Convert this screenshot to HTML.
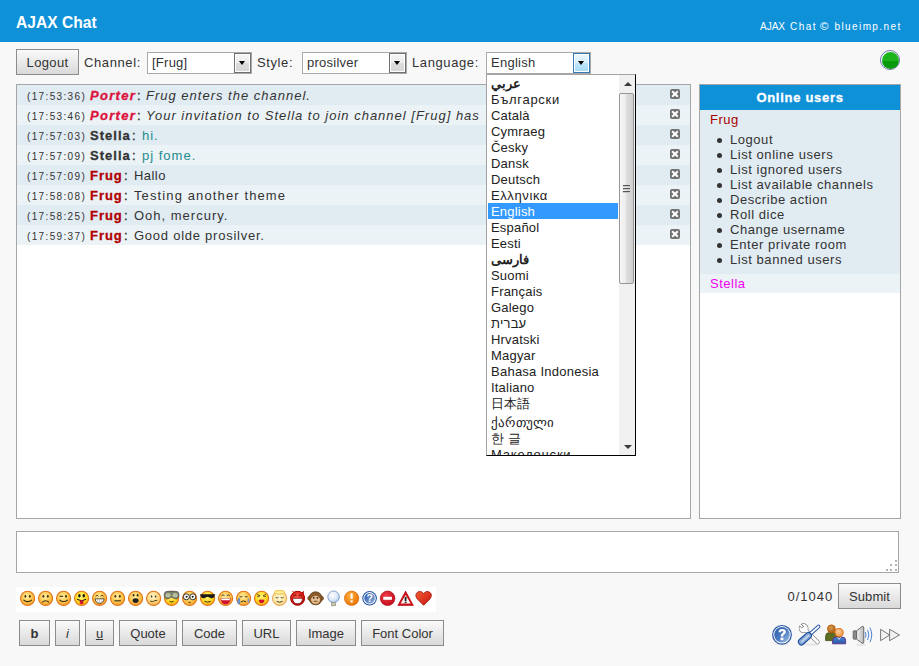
<!DOCTYPE html>
<html><head><meta charset="utf-8">
<style>
*{margin:0;padding:0;box-sizing:border-box}
html,body{width:919px;height:666px;overflow:hidden;background:#f8f8f8;font-family:"Liberation Sans",sans-serif;color:#333}
.a{position:absolute;white-space:nowrap}
#hdr{left:0;top:0;width:919px;height:42px;background:#0f91d8}
#title{left:16px;top:13.6px;font-size:15.6px;font-weight:bold;color:#fff;letter-spacing:0px}
.cp{top:21px;font-size:10px;color:#fff}
.btn{position:absolute;border:1px solid #8c8c8c;background:linear-gradient(#fafafa,#d9d9d9);font-size:13px;color:#333;text-align:center;white-space:nowrap}
.lbl{position:absolute;font-size:13px;color:#333;letter-spacing:0.6px;white-space:nowrap}
.sel{position:absolute;height:22px;border:1px solid #a9a9a9;background:#fff;font-size:13px;color:#333}
.sel .t{position:absolute;left:4px;top:2px;letter-spacing:0.25px}
.sel .dd{position:absolute;right:0;top:0;width:17px;height:20px;border:1px solid #707070;box-shadow:inset 0 0 0 1px #fff;background:linear-gradient(#f4f4f4 0,#ececec 50%,#dcdcdc 50%,#d6d6d6 100%)}
.sel .dd:after{content:"";position:absolute;left:3.75px;top:7px;border-left:3.75px solid transparent;border-right:3.75px solid transparent;border-top:4.5px solid #000}
.sel .dd.hov{border-color:#3479b4;background:linear-gradient(#eaf6fd 0,#d9f0fc 50%,#bee6fd 50%,#a7d9f5 100%)}
#chat{left:16px;top:84px;width:675px;height:435px;border:1px solid #a6a6a6;background:#fff}
.row{position:absolute;left:0;width:673px;height:20px;font-size:13px;white-space:nowrap}
.r1{background:#e1ebf2}.r2{background:#ecf3f7}
.ts{position:absolute;left:10px;top:6px;font-size:10px;color:#333;letter-spacing:1.35px}
.nm{position:absolute;left:73px;top:3px}
.col{position:absolute;top:3px;-webkit-text-stroke:0.35px #333}
.tx{position:absolute;top:3px;letter-spacing:1px}
.del{position:absolute;left:653px;top:4px;width:10px;height:10px;background:#707070;border-radius:2px}
.del:before,.del:after{content:"";position:absolute;left:1px;top:4px;width:8px;height:2px;background:#fff;transform:rotate(45deg)}
.del:after{transform:rotate(-45deg)}
.porter{color:#dc143c;font-weight:bold;font-style:italic;letter-spacing:1.3px;-webkit-text-stroke:0.35px #dc143c}
.frug{color:#b00000;font-weight:bold;letter-spacing:0.95px;-webkit-text-stroke:0.3px #b00000}
.stella{color:#333;font-weight:bold;letter-spacing:1.02px;-webkit-text-stroke:0.3px #333}
.teal{color:#1d8c90}
#online{left:699px;top:84px;width:202px;height:435px;border:1px solid #a6a6a6;background:#fff}
#online .hd{position:absolute;left:0;top:0;width:200px;height:25px;background:#0f91d8;color:#fff;font-weight:bold;font-size:13px;text-align:center;line-height:25px;letter-spacing:0.7px;-webkit-text-stroke:0.3px #fff}
#online .u1{position:absolute;left:0;top:25px;width:200px;height:164px;background:#e1ebf2}
#online .u2{position:absolute;left:0;top:189px;width:200px;height:19px;background:#ecf3f7}
.uname{position:absolute;left:10px;font-size:13px;letter-spacing:0.5px}
.menu{position:absolute;left:30px;top:47px;font-size:13px;line-height:15px;letter-spacing:0.55px}
.menu div{position:relative}
.menu div:before{content:"";position:absolute;left:-13px;top:5.5px;width:5px;height:5px;border-radius:50%;background:#333}
#ta{left:16px;top:531px;width:883px;height:42px;border:1px solid #a6a6a6;background:#fff}
#count{left:787.5px;top:589px;font-size:13px;letter-spacing:1px}
#dlist{left:486px;top:74px;width:150px;height:382px;border:1px solid #000;border-left-color:#a3a3a3;border-top-color:#a3a3a3;background:#fff;overflow:hidden}
.li{position:absolute;left:4px;height:16px;font-size:13px;line-height:16px;padding-top:1px;color:#222;letter-spacing:0.2px}
.li.sel2{left:1px;width:130px;padding-left:3px;background:#3399ff;color:#fff}
#sb{position:absolute;left:132px;top:0;width:16px;height:380px;background:#f0f0f0}
#thumb{position:absolute;left:132px;top:18px;width:15px;height:191px;border:1px solid #979797;border-radius:2px;background:linear-gradient(90deg,#f7f7f7 0,#ececec 45%,#dedede 50%,#cfcfcf 100%)}
.grip{position:absolute;left:136px;width:7px;height:1px;background:#555;box-shadow:0 1px 0 #c8c8c8}
.arr{position:absolute;left:136.5px;border-left:4px solid transparent;border-right:4px solid transparent}
.status{left:880px;top:50px;width:20px;height:20px;border-radius:50%;border:1px solid #6a71a8;background:#fff;padding:1px}
.status div{width:17px;height:17px;margin:-0.5px;border-radius:50%;background:linear-gradient(#1bb51b 50%,#0a990a 50%)}
</style></head><body>
<div class="a" id="hdr"></div>
<div class="a" id="title">AJAX Chat</div>
<div class="a cp" style="left:760px">AJAX</div><div class="a cp" style="left:790px;letter-spacing:1.5px">Chat</div><div class="a cp" style="left:820px;font-size:11.5px;top:20px">©</div><div class="a cp" style="left:834.5px;letter-spacing:1.4px">blueimp.net</div>

<div class="btn" style="left:16px;top:49px;width:63px;height:26px;line-height:24px;padding-top:1px;letter-spacing:0.35px">Logout</div>
<div class="lbl" style="left:84px;top:55px">Channel:</div>
<div class="sel" style="left:147px;top:52px;width:105px"><span class="t">[Frug]</span><span class="dd"></span></div>
<div class="lbl" style="left:257px;top:55px">Style:</div>
<div class="sel" style="left:302px;top:52px;width:105px"><span class="t">prosilver</span><span class="dd"></span></div>
<div class="lbl" style="left:412px;top:55px">Language:</div>
<div class="sel" style="left:486px;top:52px;width:105px"><span class="t">English</span><span class="dd hov"></span></div>
<div class="a status"><div></div></div>

<div class="a" id="chat">
 <div class="row r1" style="top:0px"><span class="ts">(17:53:36)</span><span class="nm porter">Porter</span><span class="col" style="left:120px">:</span><span class="tx" style="left:129px"><i>Frug enters the channel.</i></span><span class="del"></span></div>
 <div class="row r2" style="top:20px"><span class="ts">(17:53:46)</span><span class="nm porter">Porter</span><span class="col" style="left:120px">:</span><span class="tx" style="left:129px"><i>Your invitation to Stella to join channel [Frug] has</i></span><span class="del"></span></div>
 <div class="row r1" style="top:40px"><span class="ts">(17:57:03)</span><span class="nm stella">Stella</span><span class="col" style="left:115px">:</span><span class="tx" style="left:125px"><span class="teal">hi.</span></span><span class="del"></span></div>
 <div class="row r2" style="top:60px"><span class="ts">(17:57:09)</span><span class="nm stella">Stella</span><span class="col" style="left:115px">:</span><span class="tx" style="left:125px"><span class="teal">pj fome.</span></span><span class="del"></span></div>
 <div class="row r1" style="top:80px"><span class="ts">(17:57:09)</span><span class="nm frug">Frug</span><span class="col" style="left:107px">:</span><span class="tx" style="left:117px;letter-spacing:0.45px">Hallo</span><span class="del"></span></div>
 <div class="row r2" style="top:100px"><span class="ts">(17:58:08)</span><span class="nm frug">Frug</span><span class="col" style="left:107px">:</span><span class="tx" style="left:117px;letter-spacing:1.12px">Testing another theme</span><span class="del"></span></div>
 <div class="row r1" style="top:120px"><span class="ts">(17:58:25)</span><span class="nm frug">Frug</span><span class="col" style="left:107px">:</span><span class="tx" style="left:117px">Ooh, mercury.</span><span class="del"></span></div>
 <div class="row r2" style="top:140px"><span class="ts">(17:59:37)</span><span class="nm frug">Frug</span><span class="col" style="left:107px">:</span><span class="tx" style="left:117px;letter-spacing:0.75px">Good olde prosilver.</span><span class="del"></span></div>
</div>

<div class="a" id="online">
 <div class="hd">Online users</div>
 <div class="u1"></div>
 <div class="u2"></div>
 <div class="uname" style="top:26.5px;color:#aa0000">Frug</div>
 <div class="menu">
  <div>Logout</div><div>List online users</div><div>List ignored users</div><div>List available channels</div><div>Describe action</div><div>Roll dice</div><div>Change username</div><div>Enter private room</div><div>List banned users</div>
 </div>
 <div class="uname" style="top:191px;color:#f000f0">Stella</div>
</div>

<div class="a" id="ta"></div>
<div class="a" style="left:885.5px;top:568.5px;width:2px;height:2px;background:#b4b4b4"></div><div class="a" style="left:890px;top:568.5px;width:2px;height:2px;background:#b4b4b4"></div><div class="a" style="left:894.5px;top:568.5px;width:2px;height:2px;background:#b4b4b4"></div><div class="a" style="left:890px;top:564px;width:2px;height:2px;background:#b4b4b4"></div><div class="a" style="left:894.5px;top:564px;width:2px;height:2px;background:#b4b4b4"></div><div class="a" style="left:894.5px;top:559.5px;width:2px;height:2px;background:#b4b4b4"></div>
<svg class="a" style="left:16px;top:587px" width="420" height="25" viewBox="0 0 420 25"><defs>
<radialGradient id="gF" cx="45%" cy="38%" r="65%"><stop offset="0" stop-color="#fff2a8"/><stop offset="0.55" stop-color="#fcc850"/><stop offset="1" stop-color="#f49a28"/></radialGradient>
<radialGradient id="gY" cx="45%" cy="38%" r="65%"><stop offset="0" stop-color="#fff680"/><stop offset="0.6" stop-color="#ffd820"/><stop offset="1" stop-color="#f6a010"/></radialGradient>
<radialGradient id="gP" cx="45%" cy="38%" r="65%"><stop offset="0" stop-color="#fff8d0"/><stop offset="0.6" stop-color="#fcd880"/><stop offset="1" stop-color="#f4a840"/></radialGradient>
<radialGradient id="gA" cx="45%" cy="45%" r="65%"><stop offset="0" stop-color="#fffbe0"/><stop offset="0.6" stop-color="#fde8a0"/><stop offset="1" stop-color="#f8c070"/></radialGradient>
<radialGradient id="gR" cx="45%" cy="38%" r="65%"><stop offset="0" stop-color="#ff6050"/><stop offset="0.6" stop-color="#e02018"/><stop offset="1" stop-color="#b00808"/></radialGradient>
<radialGradient id="gB" cx="40%" cy="35%" r="70%"><stop offset="0" stop-color="#ffffff"/><stop offset="0.6" stop-color="#dce8f8"/><stop offset="1" stop-color="#a8c0e8"/></radialGradient>
<radialGradient id="gO" cx="40%" cy="35%" r="70%"><stop offset="0" stop-color="#ffb040"/><stop offset="1" stop-color="#e87000"/></radialGradient>
<linearGradient id="gQ" x1="0" y1="0" x2="1" y2="1"><stop offset="0" stop-color="#2a58a8"/><stop offset="1" stop-color="#90b0e0"/></linearGradient>
<radialGradient id="gRd" cx="40%" cy="35%" r="70%"><stop offset="0" stop-color="#f04048"/><stop offset="1" stop-color="#c00818"/></radialGradient>
<linearGradient id="gH" x1="0" y1="0" x2="1" y2="1"><stop offset="0" stop-color="#f06030"/><stop offset="1" stop-color="#c81010"/></linearGradient>
</defs><rect width="420" height="25" fill="#fff"/><g transform="translate(11.6,11.3)"><g transform="translate(0,0)"><circle r="7.1" fill="url(#gF)" stroke="#e0741a" stroke-width="1.1"/><ellipse cx="-2.2" cy="-2" rx="0.9" ry="1.4" fill="#3a2a10"/><ellipse cx="2.2" cy="-2" rx="0.9" ry="1.4" fill="#3a2a10"/><path d="M-4.2 1.5 Q0 5.2 4.2 1.5" stroke="#3a2a10" stroke-width="1.1" fill="none"/></g></g><g transform="translate(29.6,11.3)"><g transform="translate(0,0)"><circle r="7.1" fill="url(#gF)" stroke="#e0741a" stroke-width="1.1"/><ellipse cx="-2.2" cy="-2" rx="0.9" ry="1.4" fill="#3a2a10"/><ellipse cx="2.2" cy="-2" rx="0.9" ry="1.4" fill="#3a2a10"/><path d="M-3.5 4 Q0 1 3.5 4" stroke="#3a2a10" stroke-width="1.1" fill="none"/></g></g><g transform="translate(47.6,11.3)"><g transform="translate(0,0)"><circle r="7.1" fill="url(#gF)" stroke="#e0741a" stroke-width="1.1"/><path d="M-4 -2 L-0.5 -2" stroke="#3a2a10" stroke-width="1.1"/><ellipse cx="2.4" cy="-2" rx="0.9" ry="1.4" fill="#3a2a10"/><path d="M-4.2 1.5 Q0 5 4.2 1.5" stroke="#3a2a10" stroke-width="1.1" fill="none"/></g></g><g transform="translate(65.6,11.3)"><g transform="translate(0,0)"><circle r="7.1" fill="url(#gY)" stroke="#e0741a" stroke-width="1.1"/><ellipse cx="-2.2" cy="-2.5" rx="1.2" ry="1.8" fill="#111"/><ellipse cx="2.2" cy="-2.5" rx="1.2" ry="1.8" fill="#111"/><path d="M-4.5 1 Q0 4 4.5 1" stroke="#111" stroke-width="1" fill="none"/><path d="M-1.8 2.2 L1.8 2.2 L1.8 5 Q0 7 -1.8 5 Z" fill="#d8102a"/></g></g><g transform="translate(83.6,11.3)"><g transform="translate(0,0)"><circle r="7.1" fill="url(#gF)" stroke="#e0741a" stroke-width="1.1"/><path d="M-4 -2 Q-2.5 -4 -1 -2 M1 -2 Q2.5 -4 4 -2" stroke="#3a2a10" stroke-width="0.9" fill="none"/><path d="M-4.5 0.5 L4.5 0.5 Q4 5 0 5 Q-4 5 -4.5 0.5 Z" fill="#fff" stroke="#3a2a10" stroke-width="0.8"/><path d="M-2 0.5 V4.8 M0 0.5 V5 M2 0.5 V4.8" stroke="#999" stroke-width="0.5"/></g></g><g transform="translate(101.6,11.3)"><g transform="translate(0,0)"><circle r="7.1" fill="url(#gF)" stroke="#e0741a" stroke-width="1.1"/><ellipse cx="-2.2" cy="-2" rx="0.9" ry="1.2" fill="#3a2a10"/><ellipse cx="2.2" cy="-2" rx="0.9" ry="1.2" fill="#3a2a10"/><path d="M-3.2 2.5 L3.2 2.5" stroke="#3a2a10" stroke-width="1.1"/></g></g><g transform="translate(119.6,11.3)"><g transform="translate(0,0)"><circle r="7.1" fill="url(#gF)" stroke="#e0741a" stroke-width="1.1"/><ellipse cx="-2" cy="-3" rx="0.9" ry="1.3" fill="#3a2a10"/><ellipse cx="2" cy="-3" rx="0.9" ry="1.3" fill="#3a2a10"/><ellipse cx="0" cy="2.3" rx="3" ry="2.4" fill="#222"/></g></g><g transform="translate(137.6,11.3)"><g transform="translate(0,0)"><circle r="7.1" fill="url(#gP)" stroke="#e0741a" stroke-width="1.1"/><ellipse cx="-2" cy="-1.8" rx="0.8" ry="1.1" fill="#3a2a10"/><ellipse cx="2" cy="-1.8" rx="0.8" ry="1.1" fill="#3a2a10"/><path d="M-3.5 2.8 Q-1 4 1 2.5 Q2.5 1.8 3.5 2.2" stroke="#3a2a10" stroke-width="0.9" fill="none"/></g></g><g transform="translate(155.6,11.3)"><g transform="translate(0,0)"><circle r="7.1" fill="url(#gY)" stroke="#e0741a" stroke-width="1.1"/><path d="M-7.5 -4 Q-7 -7.5 -3 -7 L3 -7 Q7 -7.5 7.5 -4 L7 -1 Q5 2 2.5 0 L0 -1 L-2.5 0 Q-5 2 -7 -1 Z" fill="#7a7f6a" stroke="#555" stroke-width="0.8"/><ellipse cx="-3.5" cy="-3" rx="2.6" ry="2.2" fill="#b8c0a0"/><ellipse cx="3.5" cy="-3" rx="2.6" ry="2.2" fill="#b8c0a0"/><path d="M-2 3 Q0 4.5 2 3" stroke="#3a2a10" stroke-width="1" fill="none"/></g></g><g transform="translate(173.6,11.3)"><g transform="translate(0,0)"><circle r="7.1" fill="url(#gF)" stroke="#e0741a" stroke-width="1.1"/><circle cx="-3.2" cy="-1.5" r="3" fill="#fff" stroke="#222" stroke-width="0.9"/><circle cx="3.2" cy="-1.5" r="3" fill="#fff" stroke="#222" stroke-width="0.9"/><circle cx="-3" cy="-1.5" r="1" fill="#111"/><circle cx="3" cy="-1.5" r="1" fill="#111"/><path d="M-1 4 L1 4" stroke="#3a2a10" stroke-width="1"/></g></g><g transform="translate(191.6,11.3)"><g transform="translate(0,0)"><circle r="7.1" fill="url(#gY)" stroke="#e0741a" stroke-width="1.1"/><path d="M-7.5 -4 L7.5 -4 L7 -2 Q5.5 1 2.5 -0.5 L0 -1.5 L-2.5 -0.5 Q-5.5 1 -7 -2 Z" fill="#1a1a1a"/><path d="M-3 3 Q0 4.8 3 3" stroke="#3a2a10" stroke-width="1" fill="none"/></g></g><g transform="translate(209.6,11.3)"><g transform="translate(0,0)"><circle r="7.1" fill="url(#gF)" stroke="#e0741a" stroke-width="1.1"/><path d="M-4.2 -2.5 Q-2.5 -4.5 -1 -2.5 M1 -2.5 Q2.5 -4.5 4.2 -2.5" stroke="#3a2a10" stroke-width="0.9" fill="none"/><path d="M-5.2 0 L5.2 0 Q4.5 6 0 6 Q-4.5 6 -5.2 0 Z" fill="#d0102a"/><path d="M-4.5 0.3 L4.5 0.3 L4 2 L-4 2 Z" fill="#fff"/></g></g><g transform="translate(227.6,11.3)"><g transform="translate(0,0)"><circle r="7.1" fill="url(#gF)" stroke="#e0741a" stroke-width="1.1"/><path d="M-4 -2 Q-2.5 -0.5 -1 -2 M1 -2 Q2.5 -0.5 4 -2" stroke="#3a2a10" stroke-width="0.9" fill="none"/><path d="M-2.5 3.5 Q0 1.8 2.5 3.5" stroke="#3a2a10" stroke-width="1" fill="none"/><path d="M-4.5 -0.5 Q-7 3 -5.5 5.5 Q-3.5 6 -3.5 3.5 Z" fill="#6aa0e0" stroke="#3a70c0" stroke-width="0.5"/><path d="M4.5 -0.5 Q6.5 2 5.5 4 Q4 4.5 3.8 2.5 Z" fill="#6aa0e0"/></g></g><g transform="translate(245.6,11.3)"><g transform="translate(0,0)"><circle r="7.1" fill="url(#gY)" stroke="#e0741a" stroke-width="1.1"/><path d="M-4.5 -4 L-1.5 -2.5 L-4.5 -1.5 M4.5 -4 L1.5 -2.5 L4.5 -1.5" stroke="#3a2a10" stroke-width="0.8" fill="none"/><path d="M-3 2.5 Q-1.5 0.5 0 1.5 Q1.5 0.5 3 2.5 Q1.5 5.5 0 4.8 Q-1.5 5.5 -3 2.5 Z" fill="#d0102a"/></g></g><g transform="translate(263.6,11.3)"><g transform="translate(0,0)"><circle r="7.1" fill="url(#gA)" stroke="#e8a860" stroke-width="1.1"/><ellipse cx="0" cy="-6" rx="5.5" ry="1.8" fill="#fff0a0" stroke="#f0c040" stroke-width="1"/><path d="M-4 -1 Q-2.5 0.5 -1 -1 M1 -1 Q2.5 0.5 4 -1" stroke="#3a2a10" stroke-width="0.8" fill="none"/><path d="M-3 3 Q0 5 3 3" stroke="#3a2a10" stroke-width="0.9" fill="none"/></g></g><g transform="translate(281.6,11.3)"><g transform="translate(0,0)"><path d="M-6.5 -7.5 L-3 -5 L3 -5 L6.5 -7.5 L6 -3 Z" fill="#c01010"/><circle r="7" fill="url(#gR)" stroke="#a00" stroke-width="1"/><path d="M-4.2 -2.5 Q-2.5 -4.5 -1 -2.5 M1 -2.5 Q2.5 -4.5 4.2 -2.5" stroke="#400" stroke-width="0.9" fill="none"/><path d="M-5 0 L5 0 Q4.5 5.5 0 5.5 Q-4.5 5.5 -5 0 Z" fill="#fff" stroke="#600" stroke-width="0.7"/></g></g><g transform="translate(299.6,11.3)"><g><circle cx="-6" cy="0" r="2" fill="#a0703a" stroke="#6a4520" stroke-width="0.6"/><circle cx="6" cy="0" r="2" fill="#a0703a" stroke="#6a4520" stroke-width="0.6"/><circle r="6.5" fill="#8a5a2a" stroke="#5a3818" stroke-width="0.8"/><ellipse cx="0" cy="1.5" rx="4.5" ry="4" fill="#e8c090"/><circle cx="-1.8" cy="-0.5" r="0.9" fill="#222"/><circle cx="1.8" cy="-0.5" r="0.9" fill="#222"/><path d="M-2 3 L2 3" stroke="#5a3818" stroke-width="0.8"/></g></g><g transform="translate(317.6,11.3)"><g><circle cx="0" cy="-1.5" r="5.8" fill="url(#gB)" stroke="#7a9ac8" stroke-width="0.9"/><rect x="-2" y="4" width="4" height="3.5" fill="#c8c8a0" stroke="#888" stroke-width="0.6"/></g></g><g transform="translate(335.6,11.3)"><g><circle r="7.2" fill="url(#gO)" stroke="#d06000" stroke-width="0.6"/><rect x="-1.1" y="-5" width="2.2" height="5.5" fill="#fff"/><rect x="-1.1" y="2" width="2.2" height="2.2" fill="#fff"/></g></g><g transform="translate(353.6,11.3)"><g><circle r="7.3" fill="#2a5aa8"/><circle r="6.2" fill="#fff"/><circle r="5.3" fill="url(#gQ)"/><text x="0" y="3.8" font-family="Liberation Sans" font-weight="bold" font-size="10.5" fill="#fff" text-anchor="middle">?</text></g></g><g transform="translate(371.6,11.3)"><g><circle r="7.3" fill="url(#gRd)" stroke="#a00010" stroke-width="0.6"/><rect x="-4.3" y="-1.5" width="8.6" height="3" fill="#fff"/></g></g><g transform="translate(389.6,11.3)"><g><path d="M0 -7.2 L7.8 7.2 L-7.8 7.2 Z" fill="#d01018" stroke="#b00010" stroke-width="0.6" stroke-linejoin="round"/><path d="M0 -3.2 L5 5.3 L-5 5.3 Z" fill="#f6f6f6"/><rect x="-0.9" y="-1.5" width="1.8" height="4.2" fill="#222"/><rect x="-0.9" y="3.3" width="1.8" height="1.5" fill="#222"/></g></g><g transform="translate(407.6,11.3)"><g><path d="M0 7 L-6.5 0.5 Q-8.5 -2 -7.5 -4.5 Q-6 -7.3 -3 -6.8 Q-1 -6.5 0 -4.5 Q1 -6.5 3 -6.8 Q6 -7.3 7.5 -4.5 Q8.5 -2 6.5 0.5 Z" fill="url(#gH)" stroke="#a01010" stroke-width="0.8"/></g></g></svg>
<div class="a" id="count">0/1040</div>
<div class="btn" style="left:838px;top:583px;width:63px;height:26px;line-height:24px;padding-top:1px;letter-spacing:0.1px">Submit</div>

<div class="btn" style="left:19px;top:620px;padding-top:1px;width:31px;height:26px;line-height:24px;font-weight:bold">b</div>
<div class="btn" style="left:55px;top:620px;padding-top:1px;width:25px;height:26px;line-height:24px;font-style:italic">i</div>
<div class="btn" style="left:85px;top:620px;padding-top:1px;width:29px;height:26px;line-height:24px;text-decoration:underline">u</div>
<div class="btn" style="left:119px;top:620px;padding-top:1px;width:58px;height:26px;line-height:24px">Quote</div>
<div class="btn" style="left:182px;top:620px;padding-top:1px;width:55px;height:26px;line-height:24px">Code</div>
<div class="btn" style="left:242px;top:620px;padding-top:1px;width:49px;height:26px;line-height:24px">URL</div>
<div class="btn" style="left:296px;top:620px;padding-top:1px;width:60px;height:26px;line-height:24px">Image</div>
<div class="btn" style="left:361px;top:620px;padding-top:1px;width:83px;height:26px;line-height:24px">Font Color</div>

<svg class="a" style="left:768px;top:620px" width="136" height="30" viewBox="768 620 136 30">
<defs>
<linearGradient id="hq" x1="0" y1="0" x2="1" y2="1"><stop offset="0" stop-color="#2f5fae"/><stop offset="0.5" stop-color="#4a78c0"/><stop offset="1" stop-color="#a8c4e8"/></linearGradient>
<linearGradient id="ub" x1="0" y1="0" x2="0" y2="1"><stop offset="0" stop-color="#4a80d0"/><stop offset="1" stop-color="#2a58a8"/></linearGradient>
<radialGradient id="uh" cx="40%" cy="35%" r="70%"><stop offset="0" stop-color="#f8d0a0"/><stop offset="1" stop-color="#e89040"/></radialGradient>
<radialGradient id="uh2" cx="40%" cy="35%" r="70%"><stop offset="0" stop-color="#d89a50"/><stop offset="1" stop-color="#a86018"/></radialGradient>
<linearGradient id="sp" x1="0" y1="0" x2="1" y2="0"><stop offset="0" stop-color="#f4f4f4"/><stop offset="1" stop-color="#b8b8b8"/></linearGradient>
</defs>
<ellipse cx="782" cy="644" rx="7" ry="1.5" fill="#000" opacity="0.08"/>
<circle cx="782" cy="634.8" r="9.9" fill="#2a58a6"/>
<circle cx="782" cy="634.8" r="8.7" fill="#fff"/>
<circle cx="782" cy="634.8" r="7.8" fill="url(#hq)"/>
<path d="M778.6 632.2 Q778.6 628.9 782.2 628.9 Q785.9 628.9 785.9 631.8 Q785.9 633.6 783.8 634.7 Q783.3 635 783.3 636.4 L780.7 636.4 Q780.6 634.2 782.2 633.2 Q783.3 632.5 783.3 631.8 Q783.3 630.9 782.2 630.9 Q781.1 630.9 781.1 632.2 Z" fill="#fff"/>
<rect x="780.6" y="637.6" width="2.8" height="2.6" fill="#fff"/>
<!-- tools -->
<ellipse cx="811" cy="644.6" rx="8" ry="1.4" fill="#000" opacity="0.07"/>
<g transform="translate(803.6 628.2) rotate(45)">
<path d="M-4.07 -1.45 L-0.9 -1.45 L-0.9 1.45 L-4.07 1.45 A4.3 4.3 0 1 0 -4.07 -1.45 Z" fill="none" stroke="#5a5a5a" stroke-width="1.1"/>
<rect x="2" y="-1.5" width="19.2" height="3" rx="1.5" fill="none" stroke="#5a5a5a" stroke-width="1.1"/>
<path d="M-4.07 -1.45 L-0.9 -1.45 L-0.9 1.45 L-4.07 1.45 A4.3 4.3 0 1 0 -4.07 -1.45 Z" fill="#fff"/>
<rect x="2" y="-1.5" width="19.2" height="3" rx="1.5" fill="#fff"/>
</g>
<g transform="translate(818.8 626.3) rotate(138.3)">
<rect x="-1" y="-1.4" width="14" height="2.8" rx="1.4" fill="#fff" stroke="#2a5aa8" stroke-width="1"/>
<rect x="11" y="-3" width="15.2" height="6" rx="2.6" fill="#89a9d8" stroke="#1f4f9c" stroke-width="1.2"/>
<rect x="13" y="-0.9" width="10.5" height="1.6" rx="0.8" fill="#c6d8f0"/>
</g>
<!-- users -->
<path d="M825.6 640.6 L825.6 636.4 Q825.6 632.6 829.4 632.6 L833.6 632.6 Q837.2 632.6 837.2 636.4 L837.2 640.6 Z" fill="#5e6e20" stroke="#3e4a10" stroke-width="0.8"/>
<circle cx="831.4" cy="628.8" r="3.9" fill="url(#uh2)" stroke="#b85a00" stroke-width="0.9"/>
<path d="M832.6 643.8 L832.6 640.2 Q832.6 637 836.2 637 L842 637 Q845.6 637 845.6 640.2 L845.6 643.8 Z" fill="url(#ub)" stroke="#5a3080" stroke-width="0.9"/>
<path d="M837.6 637.3 L839.1 639.4 L840.6 637.3" stroke="#fff" stroke-width="0.8" fill="none"/>
<circle cx="839.1" cy="632.6" r="4.1" fill="url(#uh)" stroke="#e06800" stroke-width="0.9"/>
<!-- sound -->
<ellipse cx="861" cy="644.8" rx="5" ry="1.2" fill="#000" opacity="0.07"/>
<rect x="853.2" y="630.8" width="3.4" height="8.4" rx="0.8" fill="#8a8a8a" stroke="#555" stroke-width="0.8"/>
<path d="M856.6 630.8 L862.2 626.4 Q863.8 626 863.8 628 L863.8 641.8 Q863.8 643.8 862.2 643.2 L856.6 639.2 Z" fill="url(#sp)" stroke="#5a5a5a" stroke-width="0.9" stroke-linejoin="round"/>
<path d="M865.4 632.2 Q866.8 634.9 865.4 637.6" stroke="#4a80d0" stroke-width="1" fill="none"/>
<path d="M867.6 629.9 Q870.2 634.9 867.6 639.9" stroke="#4a80d0" stroke-width="1" fill="none"/>
<path d="M869.9 627.6 Q873.6 634.9 869.9 642.2" stroke="#4a80d0" stroke-width="1" fill="none"/>
<!-- ff arrows -->
<path d="M880.6 629.3 L889.6 635 L880.6 640.7 Z" fill="#f2f2f2" stroke="#6a6a6a" stroke-width="0.9" stroke-linejoin="round"/>
<path d="M889.6 629.3 L899.4 635 L889.6 640.7 Z" fill="#f2f2f2" stroke="#6a6a6a" stroke-width="0.9" stroke-linejoin="round"/>
</svg>
<div class="a" id="dlist">
 <div class="li" style="top:0;font-weight:bold">عربي</div>
 <div class="li" style="top:16px;letter-spacing:0.7px">Български</div>
 <div class="li" style="top:32px">Català</div>
 <div class="li" style="top:48px">Cymraeg</div>
 <div class="li" style="top:64px">Česky</div>
 <div class="li" style="top:80px">Dansk</div>
 <div class="li" style="top:96px">Deutsch</div>
 <div class="li" style="top:112px;letter-spacing:0.6px">Ελληνικα</div>
 <div class="li sel2" style="top:128px">English</div>
 <div class="li" style="top:144px">Español</div>
 <div class="li" style="top:160px">Eesti</div>
 <div class="li" style="top:176px;font-weight:bold">فارسی</div>
 <div class="li" style="top:192px">Suomi</div>
 <div class="li" style="top:208px">Français</div>
 <div class="li" style="top:224px">Galego</div>
 <div class="li" style="top:240px">עברית</div>
 <div class="li" style="top:256px">Hrvatski</div>
 <div class="li" style="top:272px">Magyar</div>
 <div class="li" style="top:288px;letter-spacing:0.25px">Bahasa Indonesia</div>
 <div class="li" style="top:304px">Italiano</div>
 <div class="li" style="top:320px">日本語</div>
 <div class="li" style="top:339px">ქართული</div>
 <div class="li" style="top:355px">한 글</div>
 <div class="li" style="top:371px;letter-spacing:0.8px">Македонски</div>
 <div id="sb"></div>
 <div id="thumb"></div>
 <div class="grip" style="top:109.5px"></div><div class="grip" style="top:112.5px"></div><div class="grip" style="top:115.5px"></div>
 <div class="arr" style="top:6.5px;border-bottom:4.5px solid #3a3a3a"></div>
 <div class="arr" style="top:369.5px;border-top:4.5px solid #3a3a3a"></div>
</div>
</body></html>
